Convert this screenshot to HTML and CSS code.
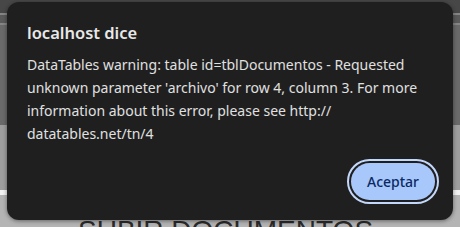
FILE: index.html
```html
<!DOCTYPE html>
<html lang="es">
<head>
    <meta charset="UTF-8">
    <meta name="viewport" content="width=device-width, initial-scale=1.0">
    <title>Documentos</title>
    <link rel="stylesheet" href="styles.css">
</head>

<body>
    <div class="page">
        <div class="topbar"></div>
        <div class="line"></div>
        <div class="nav"></div>
        <div class="line"></div>
        <div class="content">
            <div class="panel"></div>
            <div class="band"></div>
            <h2 class="page-title">SUBIR DOCUMENTOS</h2>
        </div>
    </div>

    <div class="dialog" role="alertdialog">
        <h1 class="dialog-title">localhost dice</h1>
        <p class="dialog-text">DataTables warning: table id=tblDocumentos - Requested unknown parameter 'archivo' for row 4, column 3. For more information about this error, please see http://<wbr>datatables.net/tn/4</p>
        <div class="dialog-actions">
            <button class="btn" autofocus>Aceptar</button>
        </div>
    </div>
</body>
</html>
```

FILE: styles.css
```css
* {
    margin: 0;
    padding: 0;
    box-sizing: border-box;
}

body {
    width: 460px;
    height: 227px;
    overflow: hidden;
    background: #b4b4b4;
    font-family: "Noto Sans", "Open Sans", sans-serif;
}

/* pagina de fondo */
.page {
    display: flex;
    flex-direction: column;
    height: 100%;
}

.page > div {
    flex-shrink: 0;
}

.topbar {
    height: 13px;
    background: #474747;
}

.line {
    height: 2px;
    background: #858585;
}

.nav {
    height: 8px;
    background: #5a5a5a;
}

.content {
    flex: 1;
    display: flex;
    flex-direction: column;
    background: #b4b4b4;
}

.content > * {
    flex-shrink: 0;
}

.panel {
    height: 165px;
    background: linear-gradient(180deg, #6a6a6a 0, #6a6a6a 100px, #9e9e9e 100px);
}

.band {
    height: 5px;
    background: #f2f2f2;
}

.page-title {
    margin: 19px 0 0 78px;
    font-family: "Liberation Sans", Arial, sans-serif;
    font-size: 28px;
    line-height: 34px;
    font-weight: normal;
    color: #2a2a2a;
    white-space: nowrap;
}

/* alerta del navegador */
.dialog {
    position: absolute;
    left: 7px;
    top: 2px;
    width: 446px;
    height: 218px;
    display: flex;
    flex-direction: column;
    padding: 20px 18px 20px 20px;
    background: #1f1f1f;
    border-radius: 12px;
    box-shadow: 0 1px 4px rgba(0, 0, 0, 0.45);
}

.dialog-title {
    font-size: 16.5px;
    line-height: 22px;
    font-weight: 600;
    color: #e8e8e8;
}

.dialog-text {
    margin-top: 9px;
    padding-right: 2px;
    font-size: 14px;
    line-height: 23px;
    color: #e0e0e0;
}

.dialog-actions {
    margin-top: auto;
    display: flex;
    justify-content: flex-end;
}

.btn {
    width: 84px;
    height: 37px;
    border: none;
    border-radius: 19px;
    background: #a8c7fa;
    color: #0a2a63;
    font-family: inherit;
    font-size: 14px;
    font-weight: 500;
    outline: 2px solid #c2d7fa;
    outline-offset: 2px;
    cursor: pointer;
}
```
